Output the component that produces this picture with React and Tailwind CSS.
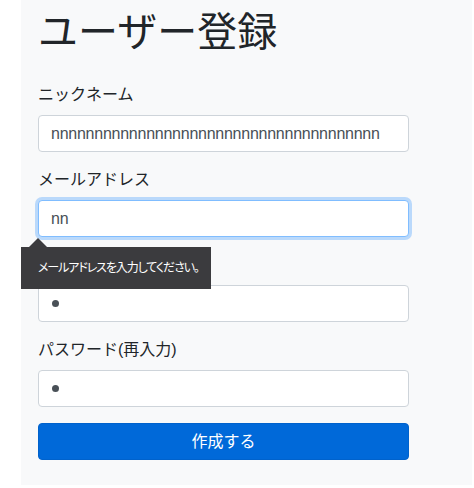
import React from "react";

const font = "font-['Liberation_Sans','Noto_Sans_CJK_JP',sans-serif]";

function Field({ label, children }) {
  return (
    <div className="mb-4">
      <label className="block mb-2 h-6 leading-6 text-[16px] text-[#212529]">{label}</label>
      {children}
    </div>
  );
}

function TextBox({ value, focused }) {
  return (
    <div
      className={
        "h-[37px] w-[371px] rounded-[4px] bg-white px-3 flex items-center text-[16px] text-[#495057] tracking-[-0.25px] border " +
        (focused
          ? "border-[#80bdff] shadow-[0_0_0_3px_rgba(0,123,255,0.25)]"
          : "border-[#ced4da]")
      }
    >
      {value}
    </div>
  );
}

function Dots() {
  return (
    <div className="h-[37px] w-[371px] rounded-[4px] bg-white border border-[#ced4da] px-3 flex items-center">
      <span className="block w-[7px] h-[7px] rounded-full bg-[#495057] ml-[1px]" />
    </div>
  );
}

export default function App() {
  return (
    <div className={"relative w-[474px] h-[488px] bg-white " + font}>
      <div className="ml-[21px] w-[451px] bg-[#f8f9fa] pt-[8px] pl-[17px] pb-[9px]">
        <h1 className="text-[40px] leading-[48px] text-[#212529] mb-[27px]">ユーザー登録</h1>

        <Field label="ニックネーム">
          <TextBox value={"n".repeat(38)} />
        </Field>

        <Field label="メールアドレス">
          <TextBox value="nn" focused />
        </Field>

        <Field label="パスワード">
          <Dots />
        </Field>

        <Field label="パスワード(再入力)">
          <Dots />
        </Field>

        <button className="h-[37px] w-[371px] rounded-[4px] bg-[#0069d9] text-white text-[16px] border border-[#0062cc] mb-4">
          作成する
        </button>
      </div>

      {/* validation bubble */}
      <div className="absolute left-[21px] top-[247px] w-[190px] h-[42px] bg-[#3b3b3e] flex items-center pl-[17px]">
        <span className="text-[12px] text-white whitespace-nowrap [font-feature-settings:'palt'] tracking-[-1.1px]">
          メールアドレスを入力してください。
        </span>
      </div>
      <div className="absolute left-[29px] top-[238px] w-0 h-0 border-l-[9px] border-r-[9px] border-b-[9px] border-l-transparent border-r-transparent border-b-[#3b3b3e]" />
    </div>
  );
}
